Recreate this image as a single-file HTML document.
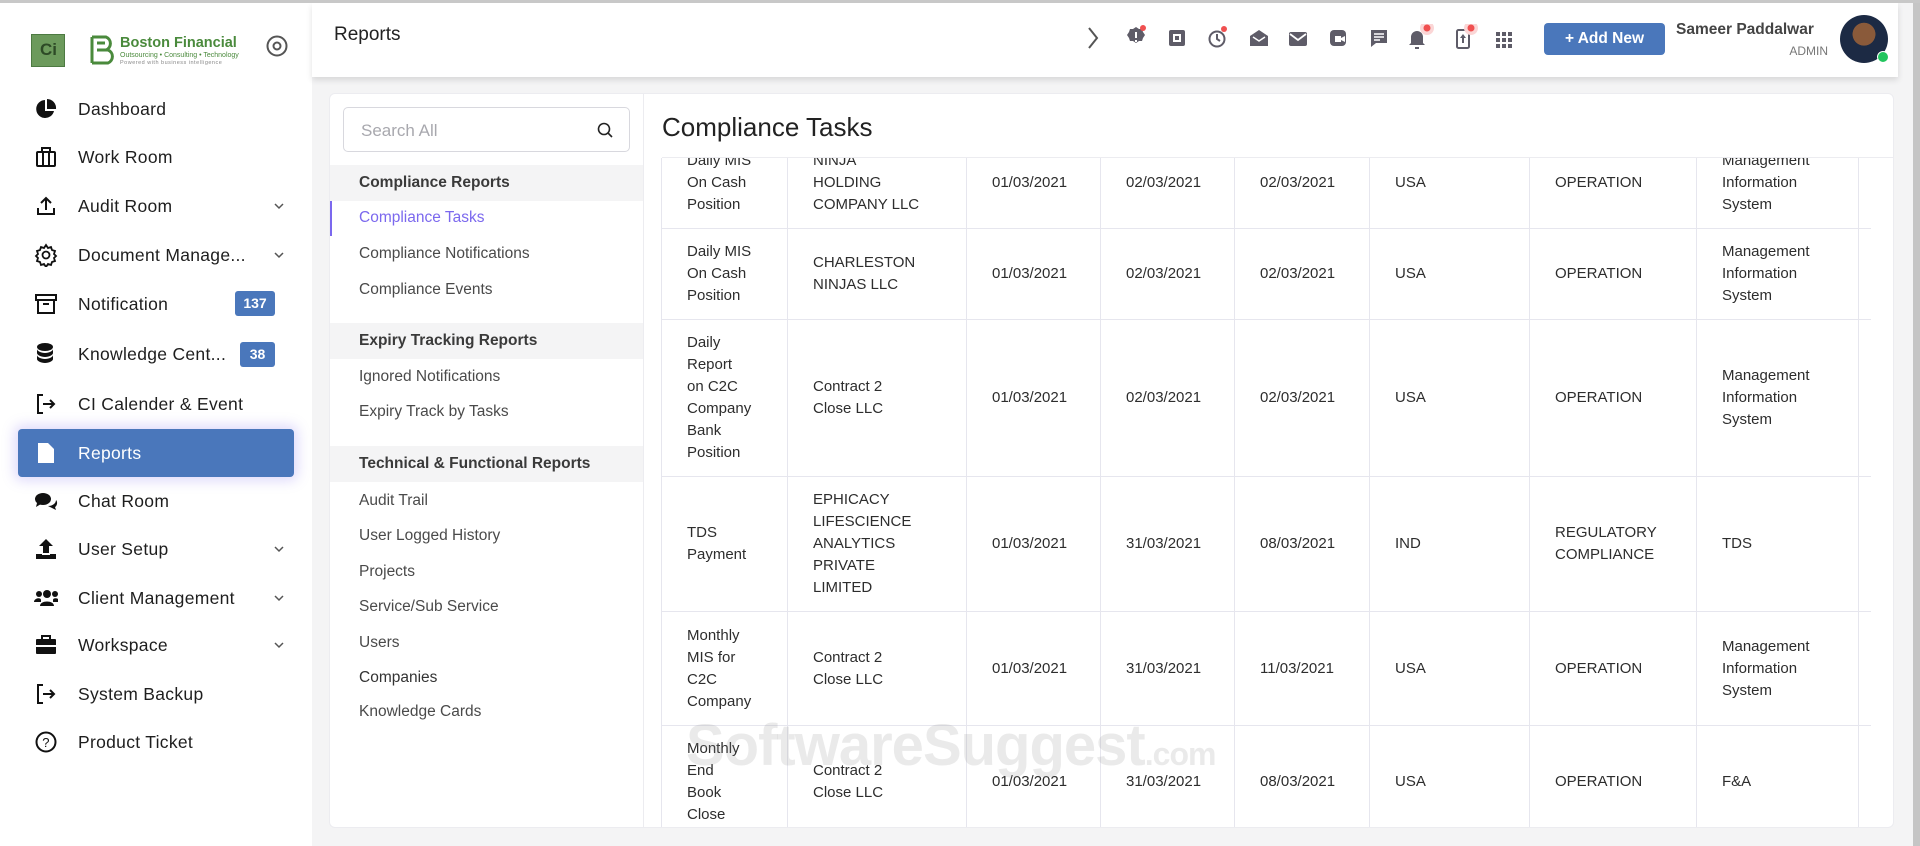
<!DOCTYPE html>
<html><head><meta charset="utf-8"><style>
*{box-sizing:border-box;margin:0;padding:0}
body{width:1920px;height:846px;overflow:hidden;background:#f4f4f5;font-family:"Liberation Sans",sans-serif;color:#2a2a2a;position:relative}
.topline{position:absolute;left:0;top:0;width:1920px;height:3px;background:#c8c8c8;z-index:5}
.side{position:absolute;left:0;top:0;width:312px;height:846px;background:#fff}
.mi{position:absolute;left:0;width:312px;height:44px;display:flex;align-items:center;font-size:17.5px;letter-spacing:.3px;color:#1e1e1e}
.mi .ic{position:absolute;left:34px;width:24px;height:24px;display:flex;align-items:center;justify-content:center}
.mi .tx{position:absolute;left:78px}
.mi .chev{position:absolute;left:272px;width:14px;height:14px}
.badge{position:absolute;background:#4a77bb;color:#fff;font-size:14px;font-weight:bold;border-radius:3px;text-align:center;line-height:25px;height:25px}
.active{left:18px;width:276px;height:48px;background:#4a77bb;border-radius:4px;color:#fff;box-shadow:0 0 12px 4px rgba(130,110,240,.25)}
.hdr{position:absolute;left:312px;top:3px;width:1586px;height:74px;background:#fff;box-shadow:0 3px 6px rgba(0,0,0,.12)}
.scroll{position:absolute;left:1913px;top:0;width:7px;height:846px;background:#c5c5c5}
.card{position:absolute;left:329px;top:93px;width:1565px;height:735px;background:#fff;border-radius:6px;border:1px solid #ececf0;overflow:hidden}
.lp{position:absolute;left:0;top:0;width:314px;height:735px;border-right:1px solid #ececf0}
.search{position:absolute;left:13px;top:13px;width:287px;height:45px;border:1px solid #d8d8de;border-radius:5px;font-size:17px;color:#a8a8ae;padding:13px 17px}
.sec{position:absolute;left:0;width:313px;height:36px;background:#f4f4f5;font-weight:bold;font-size:15.5px;color:#3a3a3a;padding-left:29px;line-height:36px}
.it{position:absolute;left:29px;font-size:15.5px;color:#4a4a4a;line-height:20px}
.title{position:absolute;left:332px;top:0;width:1233px;height:64px;border-bottom:1px solid #ececf0;font-size:26px;color:#222;padding:18px 0 0 0}
.tw{position:absolute;left:331px;top:64px;width:1210px;height:671px;overflow:hidden}
table{position:absolute;left:0;top:-21px;border-collapse:collapse;table-layout:fixed;width:1210px;font-size:15px;color:#2d2d2d}
td{border:1px solid #e6e6ee;padding:0 6px 0 25px;line-height:22px;vertical-align:middle;overflow:hidden;white-space:nowrap}
</style></head><body>
<div class="topline"></div>
<div class="side">
  <div style="position:absolute;left:31px;top:34px;width:34px;height:33px;background:#6c9a5c;border:1px solid #4d7a42;color:#2d4a26;font-weight:bold;font-size:17px;padding:5px 0 0 8px">Ci</div>
  <svg style="position:absolute;left:89px;top:35px" width="30" height="30" viewBox="0 0 30 30"><path d="M3 2v26M3 2h14a7 7 0 0 1 0 13H8M8 15h11a7 7 0 0 1 0 13H3M8 8h8" stroke="#4a8a3c" stroke-width="3" fill="none"/></svg>
  <div style="position:absolute;left:120px;top:35px;color:#4a8a3c;font-size:14.5px;font-weight:bold">Boston Financial</div>
  <div style="position:absolute;left:120px;top:52px;color:#4a8a3c;font-size:7px">Outsourcing • Consulting • Technology</div>
  <div style="position:absolute;left:120px;top:60px;color:#888;font-size:5.5px;letter-spacing:.5px">Powered with business intelligence</div>
  <svg style="position:absolute;left:266px;top:35px" width="22" height="22"><circle cx="11" cy="11" r="9.5" stroke="#555" stroke-width="2" fill="none"/><circle cx="11" cy="11" r="3.5" stroke="#555" stroke-width="2" fill="none"/></svg>

  <div class="mi" style="top:87px"><span class="ic"><svg width="22" height="22"><path d="M10 2a9 9 0 1 0 9 11H10z" fill="#111"/><path d="M12 1v10h9a9 9 0 0 0-9-10z" fill="#111"/></svg></span><span class="tx">Dashboard</span></div>
  <div class="mi" style="top:135px"><span class="ic"><svg width="22" height="22"><rect x="2" y="6" width="18" height="14" rx="1" stroke="#111" stroke-width="2" fill="none"/><path d="M7 6V2h8v4M8 6v14M14 6v14" stroke="#111" stroke-width="2" fill="none"/></svg></span><span class="tx">Work Room</span></div>
  <div class="mi" style="top:184px"><span class="ic"><svg width="22" height="22"><path d="M3 13v6h16v-6M11 15V3M6 8l5-5 5 5" stroke="#111" stroke-width="2" fill="none"/></svg></span><span class="tx">Audit Room</span><svg class="chev" viewBox="0 0 14 14"><path d="M3 5l4 4 4-4" stroke="#555" stroke-width="1.5" fill="none"/></svg></div>
  <div class="mi" style="top:233px"><span class="ic"><svg width="24" height="24" viewBox="0 0 24 24"><path d="M12 2l2 3 3-1 1 3 3 1-1 3 2 2-2 2 1 3-3 1-1 3-3-1-2 3-2-3-3 1-1-3-3-1 1-3-2-2 2-2-1-3 3-1 1-3 3 1z" stroke="#111" stroke-width="1.8" fill="none"/><circle cx="12" cy="12" r="3.5" stroke="#111" stroke-width="1.8" fill="none"/></svg></span><span class="tx">Document Manage...</span><svg class="chev" viewBox="0 0 14 14"><path d="M3 5l4 4 4-4" stroke="#555" stroke-width="1.5" fill="none"/></svg></div>
  <div class="mi" style="top:282px"><span class="ic"><svg width="24" height="24"><rect x="2" y="3" width="20" height="5" stroke="#111" stroke-width="2" fill="none"/><path d="M4 8v13h16V8M9 12h6" stroke="#111" stroke-width="2" fill="none"/></svg></span><span class="tx">Notification</span></div>
  <div class="badge" style="left:235px;top:291px;width:40px">137</div>
  <div class="mi" style="top:332px"><span class="ic"><svg width="20" height="24"><ellipse cx="9" cy="5" rx="8" ry="4" fill="#111"/><path d="M1 7v4c0 2 4 4 8 4s8-2 8-4V7c0 2-4 4-8 4S1 9 1 7zM1 13v4c0 2 4 4 8 4s8-2 8-4v-4c0 2-4 4-8 4s-8-2-8-4z" fill="#111"/></svg></span><span class="tx">Knowledge Cent...</span></div>
  <div class="badge" style="left:240px;top:342px;width:35px">38</div>
  <div class="mi" style="top:382px"><span class="ic"><svg width="24" height="24"><path d="M9 3H4v18h5M9 12h11M16 8l4 4-4 4" stroke="#111" stroke-width="2" fill="none"/></svg></span><span class="tx">CI Calender &amp; Event</span></div>
  <div class="mi active" style="top:429px"><span class="ic" style="left:16px"><svg width="18" height="22"><path d="M1 1h10l6 6v14H1z" fill="#fff"/></svg></span><span class="tx" style="left:60px">Reports</span></div>
  <div class="mi" style="top:479px"><span class="ic"><svg width="24" height="22"><ellipse cx="9" cy="9" rx="8" ry="6" fill="#111"/><path d="M3 13l-1 4 5-3zM14 16a8 6 0 0 0 8-6c2 2 1 6-1 7l1 3-4-2z" fill="#111"/></svg></span><span class="tx">Chat Room</span></div>
  <div class="mi" style="top:527px"><span class="ic"><svg width="22" height="22"><path d="M11 1l7 7h-4v7H8V8H4z" fill="#111"/><path d="M1 16h6v1h8v-1h6v5H1z" fill="#111"/></svg></span><span class="tx">User Setup</span><svg class="chev" viewBox="0 0 14 14"><path d="M3 5l4 4 4-4" stroke="#555" stroke-width="1.5" fill="none"/></svg></div>
  <div class="mi" style="top:576px"><span class="ic"><svg width="26" height="20"><circle cx="13" cy="6" r="4" fill="#111"/><circle cx="5" cy="6" r="3" fill="#111"/><circle cx="21" cy="6" r="3" fill="#111"/><path d="M6 18c0-6 14-6 14 0zM0 14c0-4 7-5 7-2v2zM26 14c0-4-7-5-7-2v2z" fill="#111"/></svg></span><span class="tx">Client Management</span><svg class="chev" viewBox="0 0 14 14"><path d="M3 5l4 4 4-4" stroke="#555" stroke-width="1.5" fill="none"/></svg></div>
  <div class="mi" style="top:623px"><span class="ic"><svg width="22" height="22"><path d="M7 5V2h8v3" stroke="#111" stroke-width="2" fill="none"/><rect x="1" y="5" width="20" height="15" rx="1" fill="#111"/><rect x="1" y="11" width="20" height="2" fill="#fff"/></svg></span><span class="tx">Workspace</span><svg class="chev" viewBox="0 0 14 14"><path d="M3 5l4 4 4-4" stroke="#555" stroke-width="1.5" fill="none"/></svg></div>
  <div class="mi" style="top:672px"><span class="ic"><svg width="24" height="24"><path d="M9 3H4v18h5M9 12h11M16 8l4 4-4 4" stroke="#111" stroke-width="2" fill="none"/></svg></span><span class="tx">System Backup</span></div>
  <div class="mi" style="top:720px"><span class="ic"><svg width="22" height="22"><circle cx="11" cy="11" r="9.5" stroke="#111" stroke-width="2" fill="none"/><text x="11" y="16" font-size="13" font-family="Liberation Sans" text-anchor="middle" fill="#111">?</text></svg></span><span class="tx">Product Ticket</span></div>
</div>

<div class="hdr">
  <div style="position:absolute;left:22px;top:21px;font-size:19px;color:#222">Reports</div>
  <svg style="position:absolute;left:774px;top:23px" width="14" height="24"><path d="M3 2l8 10-8 10" stroke="#555" stroke-width="2" fill="none"/></svg>
  <svg style="position:absolute;left:812px;top:21px" width="760" height="30">
    <g fill="#5e5c68">
      <path d="M12 3l3 2 3 0 1 3 2 3-2 3-1 3-3 0-3 2-3-2-3 0-1-3-2-3 2-3 1-3 3 0z"/><path d="M11 8h2v6h-2zM11 16h2v2h-2z" fill="#fff"/><circle cx="19" cy="4" r="3" fill="#f05050"/>
      <rect x="45" y="6" width="16" height="16" rx="2"/><rect x="49" y="10" width="8" height="8" fill="#fff"/><rect x="51" y="12" width="4" height="4"/>
      <circle cx="93" cy="15" r="7.5" fill="none" stroke="#5e5c68" stroke-width="2"/><path d="M93 10v5l3 2" stroke="#5e5c68" stroke-width="2" fill="none"/><circle cx="100" cy="5" r="3" fill="#f05050"/>
      <path d="M126 12l9-6 9 6v10h-18z"/><path d="M129 13l6 4 6-4" stroke="#fff" stroke-width="1.5" fill="none"/>
      <rect x="165" y="8" width="18" height="14" rx="2"/><path d="M166 10l8 6 8-6" stroke="#fff" stroke-width="1.8" fill="none"/>
      <path d="M210 6h8a4 4 0 0 1 4 4v8a4 4 0 0 1-4 4h-8a4 4 0 0 1-4-4v-8a4 4 0 0 1 4-4z"/><path d="M211 12h6v6h-6zM217 14l4-2v6l-4-2z" fill="#fff"/>
      <path d="M247 6h16v13h-11l-5 4z"/><path d="M250 10h10M250 13h10M250 16h6" stroke="#fff" stroke-width="1.5"/>
      <path d="M293 7a6 6 0 0 1 6 6v6l2 2h-16l2-2v-6a6 6 0 0 1 6-6z"/><path d="M291 24h4" stroke="#5e5c68" stroke-width="2"/><circle cx="303" cy="4" r="7" fill="#fbd6d6"/><circle cx="303" cy="4" r="3.5" fill="#f05050"/>
      <rect x="333" y="6" width="12" height="18" rx="1.5" fill="none" stroke="#5e5c68" stroke-width="2"/><path d="M339 10l-3 4h6zM338 14h2v5h-2z"/><circle cx="347" cy="4" r="7" fill="#fbd6d6"/><circle cx="347" cy="4" r="3.5" fill="#f05050"/>
      <g><rect x="372" y="8" width="4" height="4"/><rect x="378" y="8" width="4" height="4"/><rect x="384" y="8" width="4" height="4"/><rect x="372" y="14" width="4" height="4"/><rect x="378" y="14" width="4" height="4"/><rect x="384" y="14" width="4" height="4"/><rect x="372" y="20" width="4" height="4"/><rect x="378" y="20" width="4" height="4"/><rect x="384" y="20" width="4" height="4"/></g>
    </g>
  </svg>
  <div style="position:absolute;left:1232px;top:20px;width:121px;height:32px;background:#4a77bb;border-radius:4px;color:#fff;font-size:15.5px;font-weight:bold;text-align:center;line-height:32px">+ Add New</div>
  <div style="position:absolute;left:1364px;top:18px;font-size:15.5px;font-weight:bold;color:#444">Sameer Paddalwar</div>
  <div style="position:absolute;left:1456px;top:41px;width:60px;text-align:right;font-size:12px;color:#777">ADMIN</div>
  <div style="position:absolute;left:1528px;top:12px;width:48px;height:48px;border-radius:50%;background:radial-gradient(circle at 50% 40%,#8a5a3a 0 30%,#1c2a44 31%)"></div>
  <div style="position:absolute;left:1565px;top:48px;width:12px;height:12px;border-radius:50%;background:#22c55e;border:1px solid #fff"></div>
</div>
<div class="scroll"></div>

<div class="card">
  <div class="lp">
    <div class="search">Search All<svg style="position:absolute;right:16px;top:14px" width="16" height="17"><circle cx="7" cy="7" r="5.5" stroke="#222" stroke-width="1.6" fill="none"/><path d="M11 11l4 4" stroke="#222" stroke-width="1.6"/></svg></div>
    <div class="sec" style="top:71px">Compliance Reports</div>
    <div style="position:absolute;left:0;top:107px;width:2px;height:35px;background:#7b68ee"></div>
    <div class="it" style="top:114px;color:#7b68ee">Compliance Tasks</div>
    <div class="it" style="top:150px">Compliance Notifications</div>
    <div class="it" style="top:186px">Compliance Events</div>
    <div class="sec" style="top:229px">Expiry Tracking Reports</div>
    <div class="it" style="top:273px">Ignored Notifications</div>
    <div class="it" style="top:308px">Expiry Track by Tasks</div>
    <div class="sec" style="top:352px">Technical &amp; Functional Reports</div>
    <div class="it" style="top:397px">Audit Trail</div>
    <div class="it" style="top:432px">User Logged History</div>
    <div class="it" style="top:468px">Projects</div>
    <div class="it" style="top:503px">Service/Sub Service</div>
    <div class="it" style="top:539px">Users</div>
    <div class="it" style="top:574px;color:#333">Companies</div>
    <div class="it" style="top:608px">Knowledge Cards</div>
  </div>
  <div class="title">Compliance Tasks</div>
  <div class="tw">
  <table>
    <colgroup><col style="width:126px"><col style="width:179px"><col style="width:134px"><col style="width:134px"><col style="width:135px"><col style="width:160px"><col style="width:167px"><col style="width:162px"><col style="width:13px"></colgroup>
    <tr style="height:91px"><td>Daily MIS<br>On Cash<br>Position</td><td>NINJA<br>HOLDING<br>COMPANY LLC</td><td>01/03/2021</td><td>02/03/2021</td><td>02/03/2021</td><td>USA</td><td>OPERATION</td><td>Management<br>Information<br>System</td><td></td></tr>
    <tr style="height:91px"><td>Daily MIS<br>On Cash<br>Position</td><td>CHARLESTON<br>NINJAS LLC</td><td>01/03/2021</td><td>02/03/2021</td><td>02/03/2021</td><td>USA</td><td>OPERATION</td><td>Management<br>Information<br>System</td><td></td></tr>
    <tr style="height:157px"><td>Daily<br>Report<br>on C2C<br>Company<br>Bank<br>Position</td><td>Contract 2<br>Close LLC</td><td>01/03/2021</td><td>02/03/2021</td><td>02/03/2021</td><td>USA</td><td>OPERATION</td><td>Management<br>Information<br>System</td><td></td></tr>
    <tr style="height:135px"><td>TDS<br>Payment</td><td>EPHICACY<br>LIFESCIENCE<br>ANALYTICS<br>PRIVATE<br>LIMITED</td><td>01/03/2021</td><td>31/03/2021</td><td>08/03/2021</td><td>IND</td><td>REGULATORY<br>COMPLIANCE</td><td>TDS</td><td></td></tr>
    <tr style="height:114px"><td>Monthly<br>MIS for<br>C2C<br>Company</td><td>Contract 2<br>Close LLC</td><td>01/03/2021</td><td>31/03/2021</td><td>11/03/2021</td><td>USA</td><td>OPERATION</td><td>Management<br>Information<br>System</td><td></td></tr>
    <tr style="height:113px"><td>Monthly<br>End<br>Book<br>Close</td><td>Contract 2<br>Close LLC</td><td>01/03/2021</td><td>31/03/2021</td><td>08/03/2021</td><td>USA</td><td>OPERATION</td><td>F&amp;A</td><td></td></tr>
  </table>
  </div>
  <div style="position:absolute;left:356px;top:618px;font-size:58px;font-weight:bold;color:rgba(150,150,150,.2);letter-spacing:-1px;white-space:nowrap">SoftwareSuggest<span style="font-size:32px">.com</span></div>
</div>
</body></html>
